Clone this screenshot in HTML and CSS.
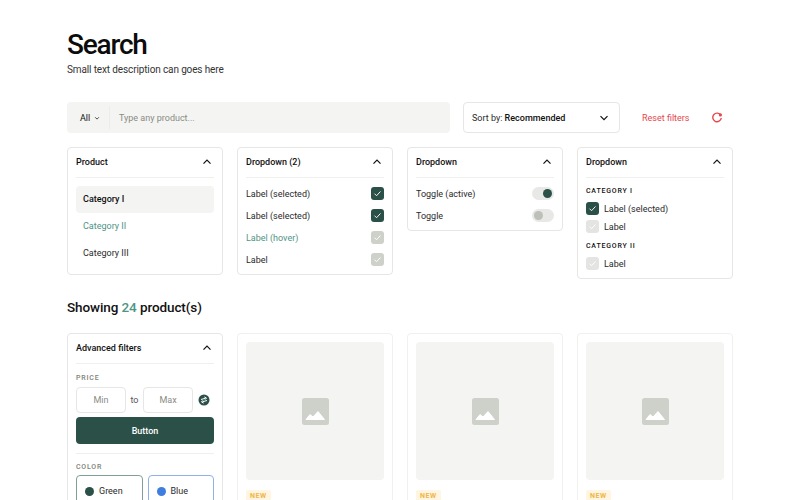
FILE: index.html
```html
<!DOCTYPE html>
<html lang="en">
<head>
<meta charset="utf-8">
<title>Search</title>
<link rel="stylesheet" href="styles.css">
</head>
<body>
<main class="page">
  <header class="head">
    <h1 class="title">Search</h1>
    <p class="sub">Small text description can goes here</p>
  </header>

  <section class="toolbar">
    <div class="search">
      <div class="scope">All
        <svg class="ic6" viewBox="0 0 8 8"><path d="M1.500 3l2.500 2.500L6.500 3" fill="none" stroke="#111" stroke-width="1"/></svg>
      </div>
      <div class="placeholder">Type any product...</div>
    </div>
    <div class="sort">
      <span>Sort by: <b>Recommended</b></span>
      <svg class="ic8" viewBox="0 0 10 10"><path d="M1.500 3.200L5 6.700l3.500-3.500" fill="none" stroke="#111" stroke-width="1.200"/></svg>
    </div>
    <div class="reset">Reset filters</div>
    <svg class="refresh" viewBox="0 0 12 12"><path d="M9.800 3.300A4.300 4.300 0 1 0 10.300 6" fill="none" stroke="#e5484d" stroke-width="1.400"/><circle cx="9.400" cy="2.900" r="1.600" fill="#e5484d"/></svg>
  </section>

  <section class="filters">
    <div class="card">
      <div class="card-head"><span>Product</span><svg class="ic8" viewBox="0 0 10 10"><path d="M1.500 6.700L5 3.200l3.500 3.500" fill="none" stroke="#111" stroke-width="1.200"/></svg></div>
      <ul class="cats">
        <li class="cat cat-on">Category I</li>
        <li class="cat cat-hover">Category II</li>
        <li class="cat">Category III</li>
      </ul>
    </div>

    <div class="card">
      <div class="card-head"><span>Dropdown (2)</span><svg class="ic8" viewBox="0 0 10 10"><path d="M1.500 6.700L5 3.200l3.500 3.500" fill="none" stroke="#111" stroke-width="1.200"/></svg></div>
      <div class="rows">
        <div class="row">Label (selected)<span class="check on"><svg viewBox="0 0 14 14"><path d="M3.800 7.200l2.200 2.200 4.200-4.600" fill="none" stroke="#fff" stroke-width="1"/></svg></span></div>
        <div class="row">Label (selected)<span class="check on"><svg viewBox="0 0 14 14"><path d="M3.800 7.200l2.200 2.200 4.200-4.600" fill="none" stroke="#fff" stroke-width="1"/></svg></span></div>
        <div class="row row-hover">Label (hover)<span class="check off"><svg viewBox="0 0 14 14"><path d="M3.800 7.200l2.200 2.200 4.200-4.600" fill="none" stroke="#fff" stroke-width="1"/></svg></span></div>
        <div class="row">Label<span class="check off"><svg viewBox="0 0 14 14"><path d="M3.800 7.200l2.200 2.200 4.200-4.600" fill="none" stroke="#fff" stroke-width="1"/></svg></span></div>
      </div>
    </div>

    <div class="card">
      <div class="card-head"><span>Dropdown</span><svg class="ic8" viewBox="0 0 10 10"><path d="M1.500 6.700L5 3.200l3.500 3.500" fill="none" stroke="#111" stroke-width="1.200"/></svg></div>
      <div class="rows">
        <div class="row">Toggle (active)<span class="toggle toggle-on"></span></div>
        <div class="row">Toggle<span class="toggle"></span></div>
      </div>
    </div>

    <div class="card">
      <div class="card-head"><span>Dropdown</span><svg class="ic8" viewBox="0 0 10 10"><path d="M1.500 6.700L5 3.200l3.500 3.500" fill="none" stroke="#111" stroke-width="1.200"/></svg></div>
      <div class="groups">
        <div class="cap">CATEGORY I</div>
        <div class="opt opt-first"><span class="check on"><svg viewBox="0 0 14 14"><path d="M3.800 7.200l2.200 2.200 4.200-4.600" fill="none" stroke="#fff" stroke-width="1"/></svg></span>Label (selected)</div>
        <div class="opt"><span class="check faint"><svg viewBox="0 0 14 14"><path d="M3.800 7.200l2.200 2.200 4.200-4.600" fill="none" stroke="#fff" stroke-width="1"/></svg></span>Label</div>
        <div class="cap cap-next">CATEGORY II</div>
        <div class="opt opt-first"><span class="check faint"><svg viewBox="0 0 14 14"><path d="M3.800 7.200l2.200 2.200 4.200-4.600" fill="none" stroke="#fff" stroke-width="1"/></svg></span>Label</div>
      </div>
    </div>
  </section>

  <h2 class="showing">Showing <em>24</em> product(s)</h2>

  <section class="results">
    <div class="card card-adv">
      <div class="card-head"><span>Advanced filters</span><svg class="ic8" viewBox="0 0 10 10"><path d="M1.500 6.700L5 3.200l3.500 3.500" fill="none" stroke="#111" stroke-width="1.200"/></svg></div>
      <div class="cap cap-muted cap-price">PRICE</div>
      <div class="range">
        <div class="num">Min</div><span class="to">to</span><div class="num">Max</div>
        <span class="swap"><svg viewBox="0 0 12 12"><circle cx="6" cy="6" r="5.500" fill="#2a5048"/><path d="M3 5.500L7.500 4.200M6.300 2.900L8.500 4 7 5.700M9 6.500L4.500 7.800M5.700 9.100L3.500 8 5 6.300" fill="none" stroke="#fff" stroke-width="1"/></svg></span>
      </div>
      <div class="btn">Button</div>
      <div class="divider"></div>
      <div class="cap cap-muted">COLOR</div>
      <div class="colors">
        <div class="color color-green"><i class="dot dot-green"></i>Green</div>
        <div class="color color-blue"><i class="dot dot-blue"></i>Blue</div>
      </div>
    </div>

    <div class="card card-prod">
      <div class="thumb"><svg viewBox="0 0 27 27"><rect width="27" height="27" rx="2.500" fill="#cdd1ca"/><path d="M4 21.500L8 16.500l3 2.500 5-5.500 6.500 8z" fill="#fff" stroke="#fff" stroke-width="1" stroke-linejoin="round"/></svg></div>
      <span class="badge">NEW</span>
    </div>
    <div class="card card-prod">
      <div class="thumb"><svg viewBox="0 0 27 27"><rect width="27" height="27" rx="2.500" fill="#cdd1ca"/><path d="M4 21.500L8 16.500l3 2.500 5-5.500 6.500 8z" fill="#fff" stroke="#fff" stroke-width="1" stroke-linejoin="round"/></svg></div>
      <span class="badge">NEW</span>
    </div>
    <div class="card card-prod">
      <div class="thumb"><svg viewBox="0 0 27 27"><rect width="27" height="27" rx="2.500" fill="#cdd1ca"/><path d="M4 21.500L8 16.500l3 2.500 5-5.500 6.500 8z" fill="#fff" stroke="#fff" stroke-width="1" stroke-linejoin="round"/></svg></div>
      <span class="badge">NEW</span>
    </div>
  </section>
</main>
</body>
</html>
```
FILE: styles.css
```css
* { box-sizing: border-box; }
html, body { margin: 0; height: 500px; overflow: hidden; background: #fff; }
body { font-family: Roboto, "Liberation Sans", sans-serif; color: #2a2a2a; font-size: 9px; }
.page { padding: 29px 67px 0; width: 800px; }

.title { margin: 0; font-size: 28px; line-height: 32px; font-weight: 500; letter-spacing: -1.2px; color: #0c0c0c; }
.sub { margin: 2px 0 0; font-size: 10px; line-height: 14px; letter-spacing: -0.13px; color: #333; }

.toolbar { display: flex; align-items: center; margin-top: 25px; }
.search { display: flex; align-items: center; width: 383px; height: 31px; background: #f4f4f2; border-radius: 4px; }
.scope { display: flex; align-items: center; gap: 4px; height: 23px; width: 43px; padding-left: 13px; border-right: 1px solid #ecece9; color: #111; }
.placeholder { padding-left: 9px; color: #888c84; }
.ic6 { width: 6px; height: 6px; }
.ic8 { width: 10px; height: 10px; flex: none; }
.sort { display: flex; align-items: center; justify-content: space-between; width: 157px; height: 31px; margin-left: 13px; padding: 0 10px 0 8px; border: 1px solid #e6e6e4; border-radius: 4px; }
.sort b { font-weight: 500; color: #111; }
.reset { margin-left: 22px; width: 45px; white-space: nowrap; color: #e5484d; }
.refresh { width: 12px; height: 12px; margin-left: 24px; }

.filters { display: flex; align-items: flex-start; gap: 14px; margin-top: 14px; }
.card { flex: 1 1 0; min-width: 0; padding: 0 8px; border: 1px solid #e6e6e4; border-radius: 4px; }
.card-head { display: flex; align-items: center; justify-content: space-between; height: 30px; padding-right: 2px; padding-bottom: 1px; border-bottom: 1px solid #efefed; font-weight: 500; color: #111; }

.cats { list-style: none; margin: 8px 0 7px; padding: 0; }
.cat { height: 27px; line-height: 27px; padding-left: 7px; }
.cat-on { background: #f4f4f2; border-radius: 4px; font-weight: 500; color: #111; }
.cat-hover, .row-hover { color: #4f9485; }

.rows { display: flex; flex-direction: column; gap: 9px; padding: 9px 0 8px; }
.row { display: flex; align-items: center; justify-content: space-between; height: 13px; }
.check { display: flex; width: 13px; height: 13px; border-radius: 3px; flex: none; }
.check svg { width: 13px; height: 13px; }
.on { background: #2a5048; }
.off { background: #cdd1ca; }
.faint { background: #e4e5e2; }
.toggle { display: flex; align-items: center; justify-content: flex-start; width: 22px; height: 13px; padding: 0 2px; border-radius: 7px; background: #e8e9e6; }
.toggle::after { content: ""; width: 9px; height: 9px; border-radius: 50%; background: #bcc0b8; }
.toggle-on { justify-content: flex-end; }
.toggle-on::after { background: #2a5048; }

.groups { padding: 9px 0 8px; }
.cap { font-size: 7px; line-height: 9px; font-weight: 500; letter-spacing: 0.8px; color: #111; }
.cap-next { margin-top: 9px; }
.opt { display: flex; align-items: center; gap: 5px; height: 13px; margin-top: 5px; }
.opt-first { margin-top: 6px; }

.showing { margin: 19px 0 0; font-size: 13.5px; line-height: 18px; font-weight: 500; letter-spacing: -0.1px; color: #111; }
.showing em { font-style: normal; color: #4f9485; }

.results { display: flex; gap: 14px; margin-top: 17px; }
.card-adv { padding-bottom: 8px; }
.cap-muted { color: #7d8178; }
.cap-price { margin-top: 10px; }
.range { display: flex; align-items: center; margin-top: 4px; }
.num { display: flex; align-items: center; justify-content: center; width: 50px; height: 26px; border: 1px solid #e6e6e4; border-radius: 4px; color: #888c84; }
.to { width: 17px; text-align: center; color: #555; }
.swap { display: flex; width: 12px; height: 12px; margin-left: 5px; }
.btn { display: flex; align-items: center; justify-content: center; height: 27px; margin-top: 4px; border-radius: 4px; background: #2a5048; color: #fff; font-weight: 500; }
.divider { height: 1px; margin: 9px 0; background: #efefed; }
.colors { display: flex; gap: 5px; margin-top: 3px; }
.color { display: flex; align-items: center; gap: 5px; flex: 1 1 0; height: 32px; padding-left: 8px; border: 1px solid; border-radius: 4px; }
.color-green { border-color: #7f9f97; }
.color-blue { border-color: #8fb0ea; }
.dot { width: 9px; height: 9px; border-radius: 50%; }
.dot-green { background: #2a5048; }
.dot-blue { background: #3f7de0; }

.card-prod { padding: 8px; border-color: #f0f0ee; }
.thumb { display: flex; align-items: center; justify-content: center; height: 138px; background: #f4f4f2; border-radius: 4px; }
.thumb svg { width: 27px; height: 27px; }
.badge { display: inline-block; margin-top: 10px; padding: 0 4px; height: 12px; line-height: 12px; background: #fff5e0; color: #efb648; font-size: 7px; font-weight: 700; letter-spacing: 0.5px; border-radius: 2px; }
```
